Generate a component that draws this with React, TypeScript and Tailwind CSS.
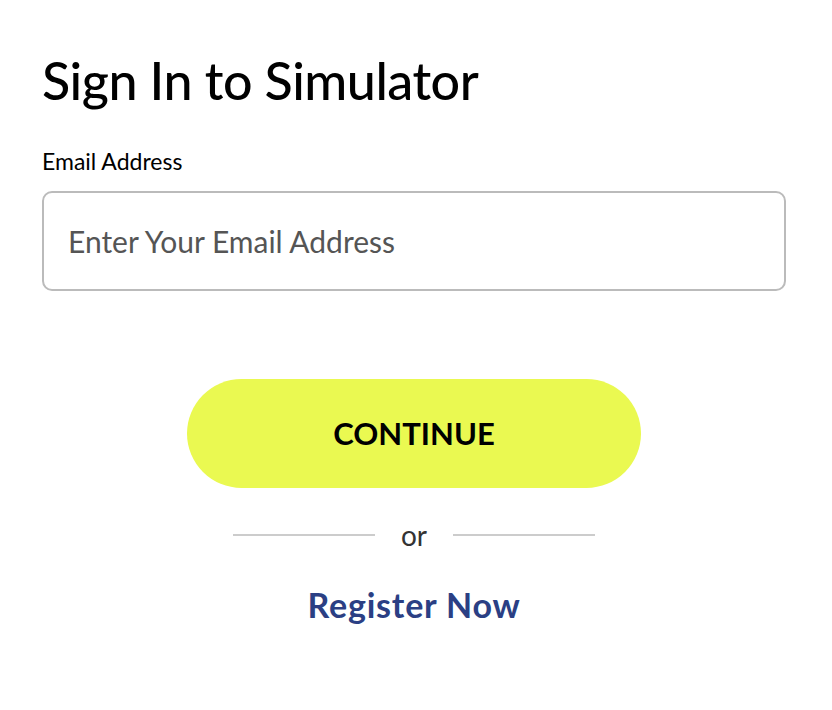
export default function App() {
  return (
    <main className="w-[832px] h-[710px] bg-white font-['Lato','Open_Sans',sans-serif]">
      <section className="ml-[42px] w-[744px] pt-[50px]">
        <h1 className="text-[52px] leading-[60px] font-medium text-black tracking-[-0.5px]">
          Sign In to Simulator
        </h1>

        <label className="block mt-[39px] text-[23px] leading-[24px] text-black">
          Email Address
        </label>
        <input
          type="email"
          placeholder="Enter Your Email Address"
          className="mt-[18px] block w-full h-[100px] rounded-[10px] border-2 border-[#bbbbbb] px-[24px] text-[30px] text-[#555555] placeholder:text-[#555555] outline-none"
        />

        <div className="flex flex-col items-center">
          <button className="mt-[88px] w-[454px] h-[109px] rounded-full bg-[#eaf951] text-[31px] font-bold text-black">
            CONTINUE
          </button>

          <div className="mt-[29px] flex items-center gap-[26px]">
            <span className="w-[142px] h-[2px] bg-[#cccccc]" />
            <span className="text-[28px] leading-[36px] text-[#333333]">or</span>
            <span className="w-[142px] h-[2px] bg-[#cccccc]" />
          </div>

          <a href="#" className="mt-[32px] text-[34px] leading-[40px] font-bold tracking-[0.8px] text-[#2b3f84]">
            Register Now
          </a>
        </div>
      </section>
    </main>
  );
}
